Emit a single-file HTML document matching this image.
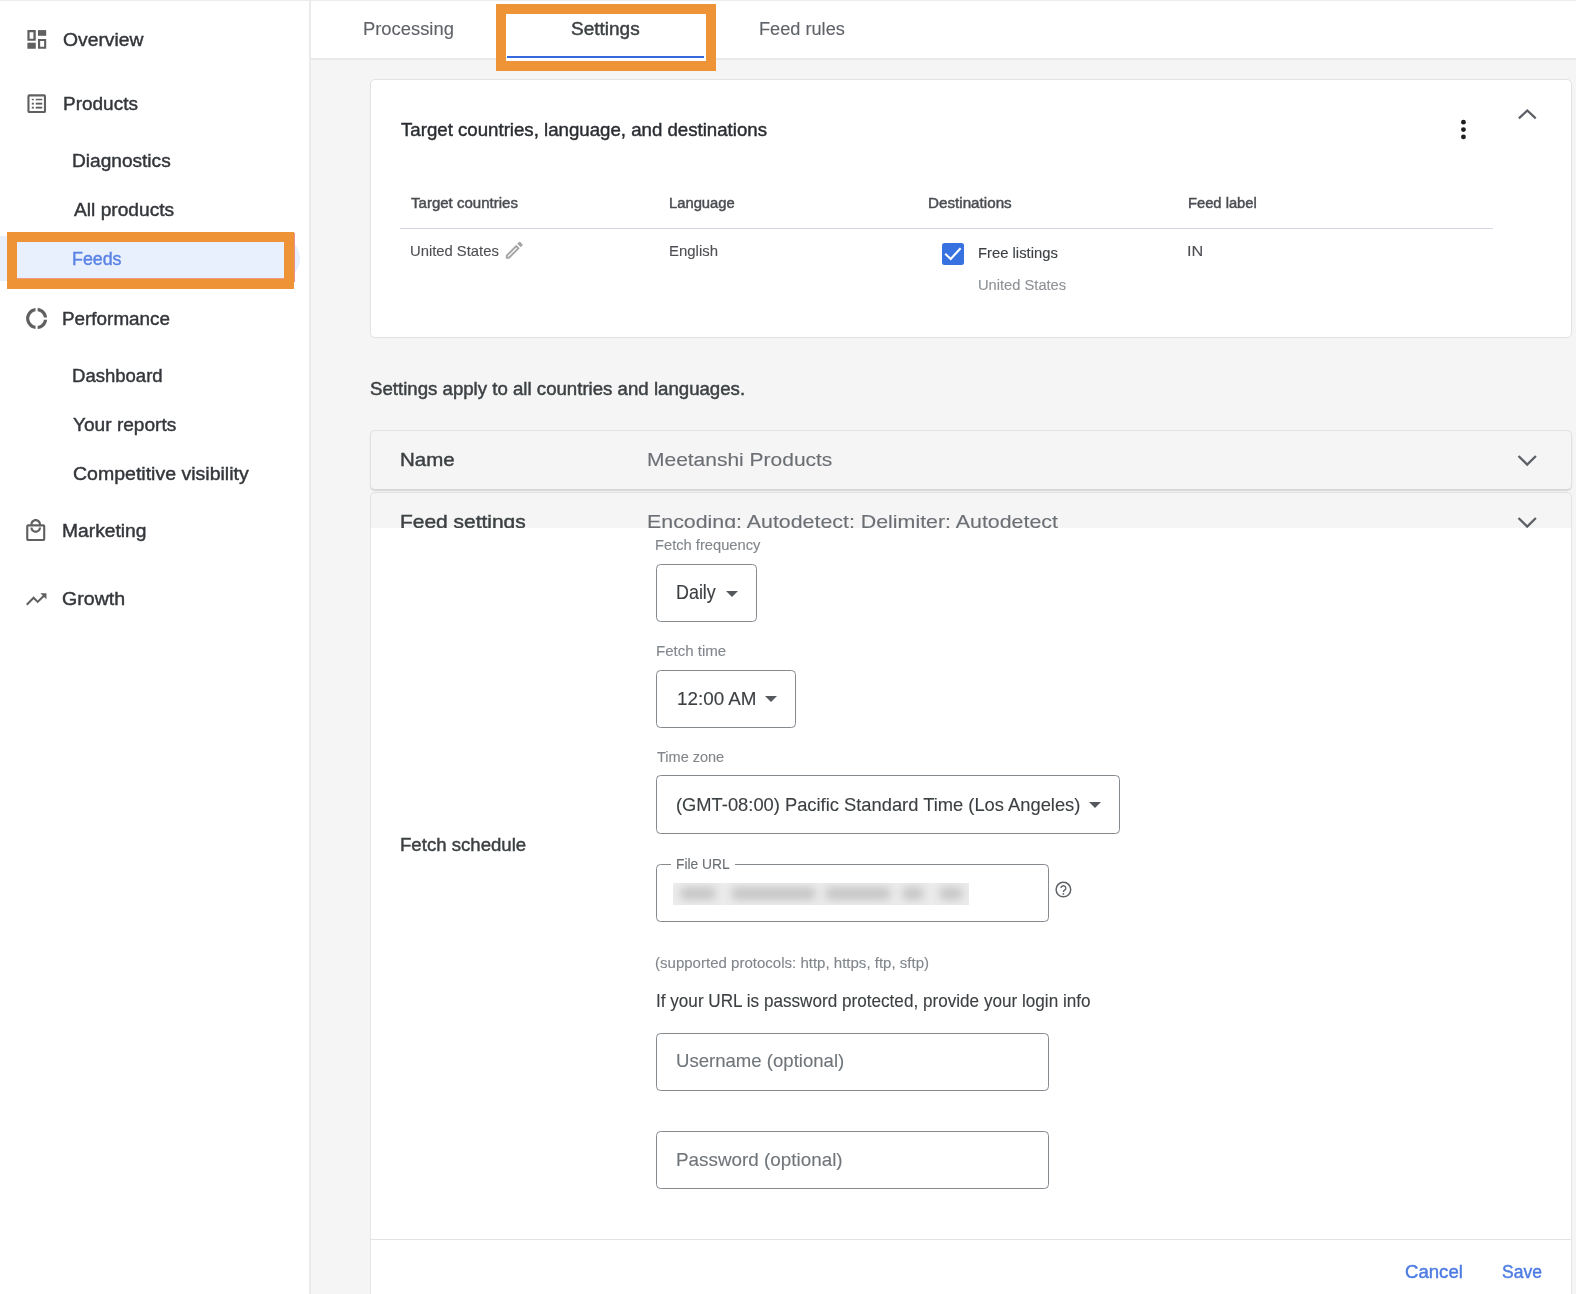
<!DOCTYPE html>
<html lang="en"><head><meta charset="utf-8"><title>Feeds - Settings</title>
<style>
html,body{margin:0;padding:0}
html{width:1576px;height:1294px;overflow:hidden}
body{width:1576px;height:1294px;position:relative;overflow:hidden;background:#f5f5f5;
 font-family:"Liberation Sans",sans-serif;}
.a{position:absolute}
.t{position:absolute;white-space:nowrap;line-height:20px;transform-origin:0 50%;font-family:"Liberation Sans",sans-serif;font-weight:400}
.g{-webkit-text-stroke:0.42px currentColor}
.gr{-webkit-text-stroke:0.12px currentColor}
.rm{-webkit-text-stroke:0.45px currentColor}
.r{-webkit-text-stroke:0.12px currentColor}
#side{left:0;top:0;width:309px;height:1294px;background:#fff;border-right:2px solid #ebebeb}
#topline{left:0;top:0;width:1576px;height:1px;background:#ececec;z-index:5}
#tabs{left:311px;top:0;width:1265px;height:58px;background:#fff;border-bottom:2px solid #e9e9e9}
#hl{left:0;top:236px;width:300px;height:45px;background:#e8f0fe;border-radius:0 23px 23px 0}
.ob{border:10px solid #ee9336;box-sizing:border-box}
#ul{left:507.3px;top:55.9px;width:196.5px;height:2.3px;background:#3568dc}
.card{box-sizing:border-box;border:1px solid #e2e2e2;border-radius:5px}
#card1{left:370px;top:79px;width:1202px;height:259px;background:#fff}
#cardn{left:370px;top:430px;width:1202px;height:60px;background:#f5f5f5;border-bottom-color:#d6d6d6;box-shadow:0 1px 1.5px rgba(0,0,0,.13)}
#cardf{left:370px;top:491.5px;width:1202px;height:60px;background:#f5f5f5}
#panel{left:370px;top:528px;width:1202px;height:766px;background:#fff;box-sizing:border-box;border-left:1px solid #e6e6e6;border-right:1px solid #e6e6e6}
#tline{left:400px;top:228px;width:1092.5px;height:1px;background:#d5d6e2}
#div{left:371px;top:1238.5px;width:1200px;height:1px;background:#e2e2e2}
.box{box-sizing:border-box;border:1px solid #858a8f;border-radius:4.5px;background:#fff}
#cb{left:942.4px;top:242.8px;width:21.9px;height:22.1px;border-radius:2.5px;background:#3871e0}
#blur{left:673px;top:883.4px;width:296px;height:21.7px;background:#ececec;overflow:hidden}
#blur i{position:absolute;top:4px;height:13px;background:#c6c6c6;filter:blur(4.5px);border-radius:6px}
#notch{left:671px;top:862px;width:64px;height:6px;background:#fff}
svg{position:absolute;overflow:visible}
</style></head>
<body>
<nav aria-label="Main menu">
<div class="a" id="side"></div>
<div class="a" id="hl"></div>
<svg style="left:0;top:0" width="60" height="60" viewBox="0 0 60 60"><g fill="#606060">
<path fill-rule="evenodd" d="M27.4 30.1 H35.75 V40.75 H27.4 Z M29.6 32.2 V38.65 H33.4 V32.2 Z"/>
<rect x="38" y="30.1" width="8.2" height="5.7"/>
<rect x="27.4" y="42.7" width="8.35" height="6.05"/>
<path fill-rule="evenodd" d="M38 39 H46.2 V48.75 H38 Z M40.15 40.95 V46.65 H44.1 V40.95 Z"/>
</g></svg>
<span class="t g" id="ov" style="left:62.76px;top:29.71px;font-size:18.00px;transform:scaleX(1.0721);color:#33363a">Overview</span>
<svg style="left:0;top:60px" width="60" height="60" viewBox="0 60 60 60">
<rect x="28.45" y="95.35" width="16.5" height="16.7" rx="0.8" fill="none" stroke="#606060" stroke-width="2.1"/>
<g fill="#606060"><rect x="31.8" y="98.8" width="2" height="1.5"/><rect x="35.75" y="98.8" width="6.5" height="1.5"/>
<rect x="31.8" y="102.7" width="2" height="1.9"/><rect x="35.75" y="102.7" width="6.5" height="1.9"/>
<rect x="31.8" y="106.7" width="2" height="1.9"/><rect x="35.75" y="106.7" width="6.5" height="1.9"/></g>
</svg>
<span class="t g" id="pr" style="left:63.34px;top:93.91px;font-size:18.00px;transform:scaleX(1.0545);color:#33363a">Products</span>
<span class="t g" id="dg" style="left:72.31px;top:150.50px;font-size:18.00px;transform:scaleX(1.0608);color:#33363a">Diagnostics</span>
<span class="t g" id="ap" style="left:73.62px;top:199.71px;font-size:18.00px;transform:scaleX(1.0653);color:#33363a">All products</span>
<span class="t g" id="fd" style="left:72.47px;top:248.71px;font-size:18.00px;transform:scaleX(0.9894);color:#5b82e4">Feeds</span>
<svg style="left:24.1px;top:306.45px" width="25.2" height="25.2" viewBox="0 0 24 24">
<path fill="#606060" d="M11 5.08V2c-5 .5-9 4.81-9 10s4 9.5 9 10v-3.08c-3-.48-6-3.4-6-6.92s3-6.44 6-6.92zM18.97 11H22c-.47-5-4-8.53-9-9v3.08C16 5.51 18.54 8 18.97 11zM13 18.92V22c5-.47 8.53-4 9-9h-3.03c-.43 3-2.97 5.49-5.97 5.92z"/></svg>
<span class="t g" id="pf" style="left:62.36px;top:309.21px;font-size:18.00px;transform:scaleX(1.0483);color:#33363a">Performance</span>
<span class="t g" id="db" style="left:72.38px;top:365.91px;font-size:18.00px;transform:scaleX(1.0292);color:#33363a">Dashboard</span>
<span class="t g" id="yr" style="left:73.14px;top:414.61px;font-size:18.00px;transform:scaleX(1.0608);color:#33363a">Your reports</span>
<span class="t g" id="cv" style="left:72.70px;top:464.11px;font-size:18.00px;transform:scaleX(1.0844);color:#33363a">Competitive visibility</span>
<svg style="left:22.83px;top:517.6px" width="25.44" height="25.2" viewBox="0 0 24 24" preserveAspectRatio="none">
<path fill="#606060" d="M19 6h-2c0-2.76-2.24-5-5-5S7 3.24 7 6H5c-1.1 0-2 .9-2 2v12c0 1.1.9 2 2 2h14c1.1 0 2-.9 2-2V8c0-1.1-.9-2-2-2zm-7-3c1.66 0 3 1.34 3 3H9c0-1.66 1.34-3 3-3zm7 17H5V8h14v12zm-7-8c-1.66 0-3-1.34-3-3H7c0 2.76 2.24 5 5 5s5-2.24 5-5h-2c0 1.66-1.34 3-3 3z"/></svg>
<span class="t g" id="mk" style="left:62.29px;top:521.00px;font-size:18.00px;transform:scaleX(1.0687);color:#33363a">Marketing</span>
<svg style="left:23.8px;top:587px" width="24.5" height="24.5" viewBox="0 0 24 24">
<path fill="#606060" d="M16 6l2.29 2.29-4.88 4.88-4-4L2 16.59 3.41 18l6-6 4 4 6.3-6.29L22 12V6z"/></svg>
<span class="t g" id="gw" style="left:61.71px;top:589.41px;font-size:18.00px;transform:scaleX(1.0881);color:#33363a">Growth</span>
</nav>
<main>
<div role="tablist">
<div class="a" id="tabs"></div>
<span class="t gr" id="t1" style="left:362.81px;top:18.91px;font-size:17.50px;transform:scaleX(1.0494);color:#5f6368">Processing</span>
<div class="a" style="left:506px;top:14px;width:200px;height:47px;background:#fff"></div>
<span class="t g" id="t2" style="left:570.88px;top:18.91px;font-size:17.50px;transform:scaleX(1.0858);color:#3c4043">Settings</span>
<div class="a" id="ul"></div>
<span class="t gr" id="t3" style="left:759.24px;top:18.91px;font-size:17.50px;transform:scaleX(1.0383);color:#5f6368">Feed rules</span>
</div>
<section>
<div class="a card" id="card1"></div>
<span class="t g" id="c1" style="left:400.71px;top:119.61px;font-size:17.75px;transform:scaleX(1.0506);color:#2a2d31">Target countries, language, and destinations</span>
<svg style="left:1455px;top:115px" width="18" height="30" viewBox="1455 115 18 30">
<g fill="#1f1f1f"><circle cx="1463.45" cy="122.15" r="2.4"/><circle cx="1463.45" cy="129.55" r="2.4"/><circle cx="1463.45" cy="136.9" r="2.4"/></g></svg>
<svg style="left:1510px;top:100px" width="34" height="30" viewBox="1510 100 34 30">
<path d="M1518.9 118.3 L1527.3 110.5 L1535.7 118.3" fill="none" stroke="#5c6066" stroke-width="2.3"/></svg>
<span class="t rm" id="h1" style="left:410.82px;top:193.21px;font-size:14.75px;transform:scaleX(1.0191);color:#4a4d51">Target countries</span>
<span class="t rm" id="h2" style="left:668.73px;top:193.21px;font-size:14.75px;transform:scaleX(1.0016);color:#4a4d51">Language</span>
<span class="t rm" id="h3" style="left:928.29px;top:193.21px;font-size:14.75px;transform:scaleX(1.0311);color:#4a4d51">Destinations</span>
<span class="t rm" id="h4" style="left:1187.55px;top:193.21px;font-size:14.75px;transform:scaleX(0.9979);color:#4a4d51">Feed label</span>
<div class="a" id="tline"></div>
<span class="t r" id="d1" style="left:409.82px;top:240.91px;font-size:15.00px;transform:scaleX(0.9860);color:#4e4e54">United States</span>
<svg style="left:503px;top:238.5px" width="22.56" height="22.56" viewBox="0 0 24 24">
<path fill="#a6a6a6" d="M14.06 9.02l.92.92L5.92 19H5v-.92l9.06-9.06M17.66 3c-.25 0-.51.1-.7.29l-1.83 1.83 3.75 3.75 1.83-1.83c.39-.39.39-1.02 0-1.41l-2.34-2.34c-.2-.2-.45-.29-.71-.29zm-3.6 3.19L3 17.25V21h3.75L17.81 9.94l-3.75-3.75z"/></svg>
<span class="t r" id="d2" style="left:668.54px;top:240.91px;font-size:15.00px;transform:scaleX(0.9954);color:#4e4e54">English</span>
<div class="a" id="cb"></div>
<svg style="left:942.4px;top:242.8px" width="22" height="22" viewBox="0 0 22 22">
<path d="M3.2 10.85 L8.7 16 L18.6 5.3" fill="none" stroke="#fff" stroke-width="2.1"/></svg>
<span class="t r" id="d3" style="left:977.75px;top:243.30px;font-size:15.50px;transform:scaleX(0.9550);color:#3c4043">Free listings</span>
<span class="t r" id="d4" style="left:977.86px;top:275.21px;font-size:15.25px;transform:scaleX(0.9626);color:#8d9196">United States</span>
<span class="t r" id="d5" style="left:1186.96px;top:240.91px;font-size:15.00px;transform:scaleX(1.0818);color:#4e4e54">IN</span>
</section>
<span class="t rm" id="sa" style="left:369.50px;top:379.00px;font-size:18.00px;transform:scaleX(1.0355);color:#3c4043">Settings apply to all countries and languages.</span>
<section>
<div class="a card" id="cardf"></div>
<span class="t g" id="f1" style="left:399.86px;top:511.61px;font-size:18.50px;transform:scaleX(1.1314);color:#3c4043">Feed settings</span>
<span class="t gr" id="f2" style="left:647.08px;top:511.61px;font-size:19.25px;transform:scaleX(1.1098);color:#6b6f74">Encoding: Autodetect; Delimiter: Autodetect</span>
<svg style="left:1510px;top:507.79999999999995px" width="34" height="30" viewBox="1510 507.79999999999995 34 30">
<path d="M1518.5 517.8 L1527.2 526.4 L1535.9 517.8" fill="none" stroke="#5c6066" stroke-width="2.3"/></svg>
</section>
<section>
<div class="a card" id="cardn"></div>
<span class="t g" id="n1" style="left:399.92px;top:450.41px;font-size:18.50px;transform:scaleX(1.1085);color:#3c4043">Name</span>
<span class="t gr" id="n2" style="left:647.11px;top:450.41px;font-size:19.25px;transform:scaleX(1.0894);color:#6b6f74">Meetanshi Products</span>
<svg style="left:1510px;top:446.4px" width="34" height="30" viewBox="1510 446.4 34 30">
<path d="M1518.5 456.4 L1527.2 465.0 L1535.9 456.4" fill="none" stroke="#5c6066" stroke-width="2.3"/></svg>
</section>
<section>
<div class="a" id="panel"></div>
<span class="t g" id="fs" style="left:400.04px;top:835.41px;font-size:17.50px;transform:scaleX(1.0631);color:#3c4043">Fetch schedule</span>
<span class="t r" id="l1" style="left:654.60px;top:534.91px;font-size:15.00px;transform:scaleX(0.9800);color:#80868b">Fetch frequency</span>
<div class="a box" style="left:656px;top:564px;width:100.5px;height:58px"></div>
<span class="t r" id="v1" style="left:676.47px;top:582.11px;font-size:19.75px;transform:scaleX(0.9061);color:#3c4043">Daily</span>
<svg style="left:723.8px;top:585.7px" width="16" height="16" viewBox="723.8 585.7 16 16">
<path d="M725.8 590.6 H737.8 L731.8 596.8000000000001 Z" fill="#55585d"/></svg>
<span class="t r" id="l2" style="left:655.55px;top:640.80px;font-size:15.25px;transform:scaleX(0.9864);color:#80868b">Fetch time</span>
<div class="a box" style="left:656px;top:669.7px;width:139.5px;height:58px"></div>
<span class="t r" id="v2" style="left:676.65px;top:688.80px;font-size:19.00px;transform:scaleX(0.9908);color:#3c4043">12:00 AM</span>
<svg style="left:762.5px;top:691.3px" width="16" height="16" viewBox="762.5 691.3 16 16">
<path d="M764.5 696.1999999999999 H776.5 L770.5 702.4 Z" fill="#55585d"/></svg>
<span class="t r" id="l3" style="left:656.63px;top:746.61px;font-size:15.25px;transform:scaleX(0.9512);color:#80868b">Time zone</span>
<div class="a box" style="left:656px;top:775px;width:464px;height:58.6px"></div>
<span class="t r" id="v3" style="left:676.00px;top:794.80px;font-size:19.00px;transform:scaleX(0.9645);color:#3c4043">(GMT-08:00) Pacific Standard Time (Los Angeles)</span>
<svg style="left:1086.9px;top:797.2px" width="16" height="16" viewBox="1086.9 797.2 16 16">
<path d="M1088.9 802.1 H1100.9 L1094.9 808.3000000000001 Z" fill="#55585d"/></svg>
<div class="a box" style="left:656px;top:864px;width:393px;height:58px"></div>
<div class="a" id="notch"></div>
<span class="t r" id="l4" style="left:675.71px;top:853.61px;font-size:15.25px;transform:scaleX(0.9064);color:#6b6f74">File URL</span>
<div class="a" id="blur"><i style="left:7px;width:36px"></i><i style="left:58px;width:85px"></i><i style="left:152px;width:66px"></i><i style="left:229px;width:22px"></i><i style="left:266px;width:24px"></i></div>
<svg style="left:1053px;top:880px" width="20" height="20" viewBox="1053 880 20 20">
<circle cx="1063.4" cy="889.55" r="7.3" fill="none" stroke="#5f6368" stroke-width="1.5"/>
<path d="M1061 888.1 a2.4 2.4 0 1 1 3.6 2.1 c-0.9 0.5 -1.2 0.9 -1.2 1.9" fill="none" stroke="#5f6368" stroke-width="1.4"/>
<circle cx="1063.4" cy="893.9" r="0.9" fill="#5f6368"/></svg>
<span class="t r" id="sp" style="left:655.34px;top:953.00px;font-size:14.50px;transform:scaleX(1.0366);color:#80868b">(supported protocols: http, https, ftp, sftp)</span>
<span class="t r" id="ip" style="left:655.54px;top:991.41px;font-size:17.75px;transform:scaleX(0.9652);color:#3c4043">If your URL is password protected, provide your login info</span>
<div class="a box" style="left:656px;top:1032.5px;width:393px;height:58.5px"></div>
<span class="t r" id="un" style="left:676.08px;top:1051.30px;font-size:19.00px;transform:scaleX(0.9771);color:#70757a">Username (optional)</span>
<div class="a box" style="left:656px;top:1131px;width:393px;height:58px"></div>
<span class="t r" id="pw" style="left:675.92px;top:1149.50px;font-size:19.00px;transform:scaleX(0.9923);color:#70757a">Password (optional)</span>
<div class="a" id="div"></div>
<span class="t g" id="ca" style="left:1404.77px;top:1262.21px;font-size:18.00px;transform:scaleX(1.0334);color:#4c7be2">Cancel</span>
<span class="t g" id="sv" style="left:1502.38px;top:1262.21px;font-size:18.00px;transform:scaleX(0.9716);color:#4c7be2">Save</span>
</section>
</main>
<div class="a ob" style="left:7px;top:232px;width:287px;height:56.8px"></div>
<div class="a" style="left:294px;top:233px;width:1px;height:49px;background:#ea908c"></div>
<div class="a" style="left:17px;top:278px;width:267px;height:1px;background:#ec9a86"></div>
<div class="a ob" style="left:496px;top:4px;width:220px;height:67px"></div>
<div class="a" id="topline"></div>
</body></html>
